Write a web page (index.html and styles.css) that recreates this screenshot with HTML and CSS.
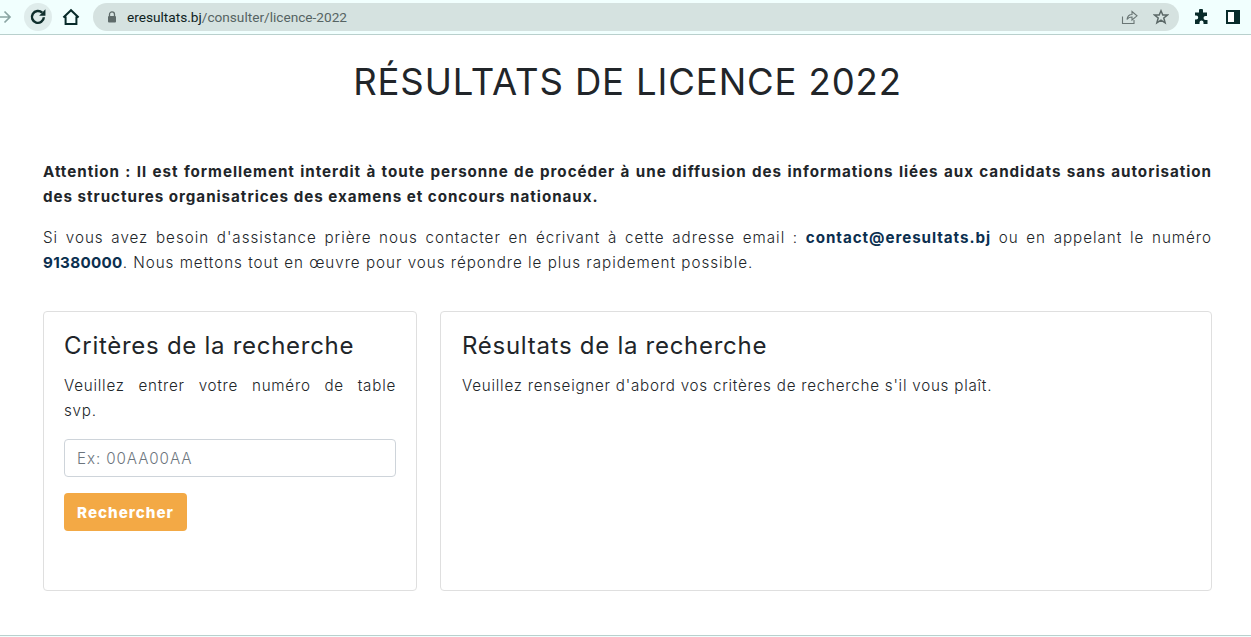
FILE: index.html
```html
<!DOCTYPE html>
<html lang="fr">
<head>
<meta charset="utf-8">
<title>Résultats de licence 2022</title>
<link rel="stylesheet" href="styles.css">
</head>
<body>
<header class="toolbar">
  <svg class="forward" width="14" height="14" viewBox="0 0 14 14"><path d="M0 7H12M6.500 1.500L12 7L6.500 12.500" fill="none" stroke="#8ba5a3" stroke-width="1.700"/></svg>
  <span class="reload"><svg width="18" height="18" viewBox="0 0 16 16"><path d="M13.200 8.200A5.300 5.300 0 1 1 11.700 4.200" fill="none" stroke="#0f2e2c" stroke-width="2.200"/><path d="M14.600 1.200V6.800H9Z" fill="#0f2e2c"/></svg></span>
  <svg class="home" width="18" height="18" viewBox="0 0 18 18"><path d="M3.600 8.600V16H14.400V8.600M1.400 9.400L9 2.200L16.600 9.400" fill="none" stroke="#082b2a" stroke-width="2"/></svg>
  <div class="omnibox">
    <svg class="lock" width="10" height="12" viewBox="0 0 10 12"><path d="M2.500 5V3.400a2.500 2.500 0 0 1 5 0V5" fill="none" stroke="#5f6b6a" stroke-width="1.300"/><rect x="1" y="5" width="8" height="6.500" rx="1" fill="#5f6b6a"/></svg>
    <span class="url"><span class="host">eresultats.bj</span>/consulter/licence-2022</span>
    <svg class="share" width="17" height="16" viewBox="0 0 17 16"><path d="M1.500 7.500V14.500H13V11M6 10.500C6.500 7 9 5.500 11 5.500V2.500L16 6.800L11 11V8C9 8 7 8.800 6 10.500Z" fill="none" stroke="#6a7675" stroke-width="1.100"/></svg>
    <svg class="star" width="16" height="16" viewBox="0 0 16 16"><path d="M8 1.800L9.800 6H14.500L10.800 9L12.100 13.800L8 11.100L3.900 13.800L5.200 9L1.500 6H6.200Z" fill="none" stroke="#5b6867" stroke-width="1.500"/></svg>
  </div>
  <svg class="ext" width="16" height="16" viewBox="0 0 16 16"><path d="M6 1.500a2 2 0 0 1 4 0V3.500H14V7H12.500a2 2 0 0 0 0 4H14.500V15H10.500V13.500a2 2 0 0 0-4 0V15H2V10.500H3.200a2 2 0 0 0 0-4H2V3.500H6Z" fill="#082b2a"/></svg>
  <svg class="side" width="14" height="14" viewBox="0 0 14 14"><rect x="1" y="1" width="12" height="12" fill="#fff" stroke="#082b2a" stroke-width="2"/><rect x="8" y="1" width="5" height="12" fill="#082b2a"/></svg>
</header>
<main class="page">
  <h1 class="title">RÉSULTATS DE LICENCE 2022</h1>
  <p class="notice"><strong>Attention : Il est formellement interdit à toute personne de procéder à une diffusion des informations liées aux candidats sans autorisation des structures organisatrices des examens et concours nationaux.</strong></p>
  <p class="help">Si vous avez besoin d'assistance prière nous contacter en écrivant à cette adresse email : <strong class="accent">contact@eresultats.bj</strong> ou en appelant le numéro <strong class="accent accent-number">91380000</strong>. Nous mettons tout en œuvre pour vous répondre le plus rapidement possible.</p>
  <div class="columns">
    <section class="card">
      <h2 class="card-title">Critères de la recherche</h2>
      <p class="card-text card-text-wrap">Veuillez entrer votre numéro de table svp.</p>
      <input class="field" type="text" placeholder="Ex: 00AA00AA">
      <button class="btn" type="button">Rechercher</button>
    </section>
    <section class="card card-results">
      <h2 class="card-title">Résultats de la recherche</h2>
      <p class="card-text">Veuillez renseigner d'abord vos critères de recherche s'il vous plaît.</p>
    </section>
  </div>
</main>
<div class="rule"></div>
</body>
</html>
```
FILE: styles.css
```css
* { box-sizing: border-box; }
html, body { margin: 0; height: 100%; }
body {
  width: 1251px;
  height: 637px;
  overflow: hidden;
  background: #fff;
  color: #212529;
  font-family: "Inter", "Liberation Sans", sans-serif;
  display: flex;
  flex-direction: column;
}
.toolbar {
  height: 35px;
  flex: none;
  background: #f1fffe;
  border-bottom: 1px solid #b9d0cd;
  display: flex;
  align-items: center;
}
.forward { margin-left: -2px; margin-right: 12px; }
.reload {
  width: 28px;
  height: 28px;
  border-radius: 50%;
  background: #dfeceb;
  display: flex;
  align-items: center;
  justify-content: center;
}
.home { margin-left: 10px; margin-right: 13px; }
.omnibox {
  width: 1086px;
  height: 28px;
  border-radius: 14px;
  background: #d5e2e0;
  display: flex;
  align-items: center;
  padding-left: 14px;
  padding-right: 10px;
}
.url {
  margin-left: 10px;
  font: 13.650px "Roboto", "Liberation Sans", sans-serif;
  color: #566463;
  flex: 1;
}
.host { color: #0f2322; }
.share { margin-right: 15px; }
.ext { margin-left: 14px; }
.side { margin-left: 17px; }
.page {
  flex: 1;
  padding: 0 39px 0 43px;
}
.title {
  margin: 23px 0 0;
  height: 48px;
  text-align: center;
  font-size: 36.500px;
  line-height: 48px;
  font-weight: 400;
  letter-spacing: 0.880px;
  color: #212529;
}
.notice, .help {
  margin: 0;
  font-size: 15.200px;
  line-height: 25px;
  text-align: justify;
}
.notice { margin-top: 53px; }
.notice strong { font-weight: 700; letter-spacing: 0.960px; }
.help { margin-top: 16px; font-weight: 300; letter-spacing: 0.980px; }
.accent { font-weight: 700; color: #0b2f4f; letter-spacing: 0.940px; }
.accent-number { letter-spacing: 0.320px; }
.columns {
  margin-top: 36px;
  display: grid;
  grid-template-columns: 374px 772px;
  column-gap: 23px;
}
.card {
  height: 280px;
  border: 1px solid #dfdfdf;
  border-radius: 4px;
  padding: 19px 20px 20px;
}
.card-results { padding-left: 21px; }
.card-title {
  margin: 0;
  font-size: 24px;
  line-height: 29px;
  font-weight: 400;
  letter-spacing: 0.720px;
}
.card-text {
  margin: 13px 0 0;
  font-size: 15.200px;
  line-height: 25px;
  font-weight: 300;
  text-align: justify;
  letter-spacing: 0.760px;
}
.card-text-wrap { word-spacing: 2px; }
.field {
  display: block;
  width: 100%;
  height: 38px;
  margin-top: 16px;
  padding: 0 12px;
  border: 1px solid #ced4da;
  border-radius: 4px;
  background: #fff;
  font: 300 15.200px "Inter", "Liberation Sans", sans-serif;
  letter-spacing: 0.900px;
}
.field::placeholder { color: #6c757d; opacity: 1; }
.btn {
  display: block;
  height: 38px;
  margin-top: 16px;
  padding: 0 13px;
  border: 0;
  border-radius: 4px;
  background: #f3a945;
  color: #fff;
  font: 800 15.200px "Inter", "Liberation Sans", sans-serif;
  letter-spacing: 1px;
}
.rule {
  height: 2px;
  flex: none;
  background: #f1fffe;
  border-top: 1px solid #b9d0cd;
}
```
